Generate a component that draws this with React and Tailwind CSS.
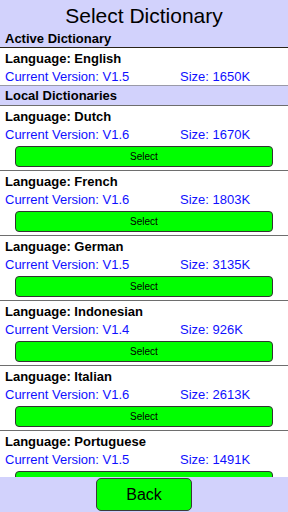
import React from 'react';

const dictionaries = [
  { language: 'Dutch', version: 'V1.6', size: '1670K' },
  { language: 'French', version: 'V1.6', size: '1803K' },
  { language: 'German', version: 'V1.5', size: '3135K' },
  { language: 'Indonesian', version: 'V1.4', size: '926K' },
  { language: 'Italian', version: 'V1.6', size: '2613K' },
  { language: 'Portuguese', version: 'V1.5', size: '1491K' }
];

export default function App() {
  return (
    <div
      className="w-[288px] h-[512px] flex flex-col bg-white overflow-hidden text-black"
      style={{ fontFamily: '"Liberation Sans", Arial, sans-serif' }}
    >
      {/* header */}
      <div className="bg-[#d2d2fc] shrink-0">
        <h1 className="h-[30px] flex items-center justify-center text-[21px] leading-none">
          Select Dictionary
        </h1>
        <div className="h-[17px] flex items-center px-[5px] text-[13px] font-bold leading-none">
          Active Dictionary
        </div>
      </div>

      {/* list */}
      <div className="flex-1 overflow-hidden">
        <div className="border-t border-[#2a2418]">
          <InfoRows language="English" version="V1.5" size="1650K" />
        </div>
        <div className="h-[20px] bg-[#d2d2fc] border-t border-[#9a9aa8] flex items-center px-[5px] text-[13px] font-bold leading-none">
          Local Dictionaries
        </div>
        {dictionaries.map((d) => (
          <DictionaryRow key={d.language} {...d} />
        ))}
      </div>

      {/* footer */}
      <div className="h-[35px] shrink-0 bg-[#d2d2fc] flex items-start justify-center pt-[1px]">
        <button className="block w-[96px] h-[33px] bg-[#00ff00] border border-[#3a3a3a] rounded-[5px] text-[16px] leading-none">
          Back
        </button>
      </div>
    </div>
  );
}

function InfoRows({ language, version, size }) {
  return (
    <>
      <div className="h-[20px] flex items-center px-[5px] text-[13px] font-bold leading-none">
        Language: {language}
      </div>
      <div className="h-[17px] flex items-center px-[5px] text-[13px] leading-none text-[#1010ff]">
        <span className="w-[175px]">Current Version: {version}</span>
        <span>Size: {size}</span>
      </div>
    </>
  );
}

function DictionaryRow({ language, version, size }) {
  return (
    <div className="border-t border-[#6e6e6e]">
      <InfoRows language={language} version={version} size={size} />
      <div className="px-[15px] pt-[3px] pb-[3px]">
        <button className="block w-full h-[21px] bg-[#00ff00] border border-[#333] rounded-[4px] text-[10px] leading-none">
          Select
        </button>
      </div>
    </div>
  );
}
